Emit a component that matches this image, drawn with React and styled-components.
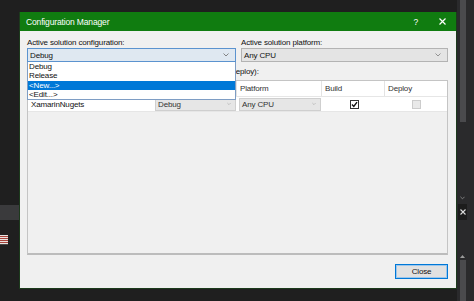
import React from "react";
import styled, { createGlobalStyle } from "styled-components";

const FONT = `"Liberation Sans", Arial, sans-serif`;

const COLORS = {
  desk: "#1f1f1f",
  rail: "#252526",
  green: "#107c10",
  face: "#f0f0f0",
  text: "#111",
  blue: "#0078d7",
  border: "#c4c4c4",
};

const GlobalStyle = createGlobalStyle`
  html, body {
    margin: 0;
    padding: 0;
    background: ${COLORS.desk};
  }
  body {
    font-family: ${FONT};
    font-size: 8px;
    letter-spacing: -0.15px;
    color: ${COLORS.text};
  }
`;

const Screen = styled.div`
  width: 474px;
  height: 301px;
  overflow: hidden;
  display: grid;
  grid-template-columns: 19px 438px 17px;
  grid-template-rows: 12px 277px 12px;
  background: ${COLORS.desk};
`;

const LeftRail = styled.div`
  grid-column: 1;
  grid-row: 1 / -1;
  display: flex;
  flex-direction: column;
  background: ${COLORS.desk};
`;

const RailBand = styled.div`
  margin-top: 205px;
  height: 15px;
  background: #3a3a3c;
`;

const RailIcon = styled.div`
  margin-top: 15px;
  display: flex;
`;

const RightRail = styled.div`
  grid-column: 3;
  grid-row: 1 / -1;
  display: flex;
  flex-direction: column;
  align-items: center;
  background: #2a2a2c;
  color: #c8c8c8;
  padding-left: 1px;
  padding-right: 7px;
`;

const Thumb = styled.div`
  width: 6px;
  height: ${(p) => p.$h}px;
  background: #4a4a4d;
  flex: ${(p) => (p.$grow ? 1 : "none")};
`;

const RailGlyph = styled.div`
  height: ${(p) => p.$h}px;
  display: flex;
  align-items: center;
  justify-content: center;
  width: 9px;
  background: ${(p) => p.$bg || "transparent"};
`;

const Dialog = styled.div`
  grid-column: 2;
  grid-row: 2;
  display: flex;
  flex-direction: column;
  background: ${COLORS.face};
  border: 1px solid #1c3a1c;
  border-top: none;
`;

const TitleBar = styled.div`
  height: 19px;
  flex: none;
  display: flex;
  align-items: center;
  background: ${COLORS.green};
  color: #fff;
  padding-left: 6px;
  padding-right: 10px;
  font-size: 8.5px;
`;

const TitleButtons = styled.div`
  margin-left: auto;
  display: flex;
  align-items: center;
  gap: 21px;
`;

const Body = styled.div`
  flex: 1;
  display: flex;
  flex-direction: column;
  padding: 6px 8px 9px 7px;
`;

const TopRow = styled.div`
  display: grid;
  grid-template-columns: 209px 207px;
  gap: 5px;
`;

const Field = styled.div`
  display: flex;
  flex-direction: column;
  position: relative;
`;

const Label = styled.div`
  height: 11px;
  line-height: 11px;
  white-space: nowrap;
  margin-top: ${(p) => p.$mt || 0}px;
`;

const Combo = styled.div`
  height: 14px;
  box-sizing: border-box;
  display: flex;
  align-items: center;
  padding: 0 6px 0 2px;
  border: 1px solid ${(p) => (p.$open ? "#5b93cf" : "#b3b3b3")};
  background: ${(p) => (p.$open ? "#dfe8f1" : "#e4e4e4")};
`;

const ComboText = styled.span`
  flex: 1;
`;

const DropList = styled.div`
  position: absolute;
  top: 100%;
  left: 0;
  right: 0;
  z-index: 2;
  background: #fff;
  border: 1px solid #7e9dc4;
  border-top: none;
  display: flex;
  flex-direction: column;
`;

const DropItem = styled.div`
  height: 9.25px;
  line-height: 9.25px;
  padding-left: 1px;
  background: ${(p) => (p.$active ? COLORS.blue : "transparent")};
  color: ${(p) => (p.$active ? "#fff" : COLORS.text)};
`;

const Table = styled.div`
  flex: 1;
  margin-top: 3px;
  margin-bottom: 9px;
  border: 1px solid ${COLORS.border};
  border-bottom: 2px solid #bcbcbc;
  background: ${COLORS.face};
  display: flex;
  flex-direction: column;
`;

const GridRow = styled.div`
  display: grid;
  grid-template-columns: 125px 84px 85px 63px 1fr;
  height: ${(p) => p.$h}px;
  background: #fff;
  border-bottom: 1px solid #e6e6e6;
`;

const HeadCell = styled.div`
  display: flex;
  align-items: center;
  padding-left: 3px;
  border-right: 1px solid #e3e3e3;
  color: #333;
  &:last-child {
    border-right: none;
  }
`;

const Cell = styled.div`
  display: flex;
  align-items: center;
  justify-content: ${(p) => (p.$center ? "center" : "flex-start")};
  padding: ${(p) => (p.$pad ? "0 3px" : "0 1px 0 2px")};
`;

const CellCombo = styled.div`
  flex: 1;
  height: 13px;
  box-sizing: border-box;
  display: flex;
  align-items: center;
  padding: 0 4px 0 2px;
  background: #e6e6e6;
  border: 1px solid #cfcfcf;
  color: #333;
`;

const Check = styled.div`
  width: 9px;
  height: 9px;
  box-sizing: border-box;
  display: flex;
  align-items: center;
  justify-content: center;
  border: 1px solid ${(p) => (p.$disabled ? "#cccccc" : "#333")};
  background: ${(p) => (p.$disabled ? "#e9e9e9" : "#fff")};
`;

const Footer = styled.div`
  display: flex;
  justify-content: flex-end;
`;

const Button = styled.button`
  width: 53px;
  height: 15px;
  padding: 0;
  font-family: ${FONT};
  font-size: 8px;
  letter-spacing: -0.15px;
  color: ${COLORS.text};
  background: #e1e1e1;
  border: 1px solid ${COLORS.blue};
  box-shadow: inset 0 0 0 1px #9cc6ec;
`;

const Chevron = ({ color = "#777", w = 6 }) => (
  <svg width={w} height="4" viewBox="0 0 6 4">
    <path d="M0.5 0.5 L3 3 L5.5 0.5" fill="none" stroke={color} strokeWidth="0.9" />
  </svg>
);

const CloseX = () => (
  <svg width="7" height="7" viewBox="0 0 7 7">
    <path d="M0.5 0.5 L6.5 6.5 M6.5 0.5 L0.5 6.5" stroke="#fff" strokeWidth="1.2" />
  </svg>
);

const Tick = () => (
  <svg width="7" height="7" viewBox="0 0 7 7">
    <path d="M1 3.6 L2.8 5.4 L6 1.2" fill="none" stroke="#111" strokeWidth="1.4" />
  </svg>
);

const Flag = () => (
  <svg width="8" height="11" viewBox="0 0 8 11">
    {[0, 2, 4, 6, 8].map((y) => (
      <rect key={y} x="0" y={y} width="8" height="1.2" fill="#e8e3df" />
    ))}
    {[1, 3, 5, 7].map((y) => (
      <rect key={y} x="0" y={y + 0.2} width="8" height="0.8" fill="#c0443a" />
    ))}
  </svg>
);

const configs = ["Debug", "Release", "<New...>", "<Edit...>"];

export default function App() {
  return (
    <>
      <GlobalStyle />
      <Screen>
        <LeftRail>
          <RailBand />
          <RailIcon>
            <Flag />
          </RailIcon>
        </LeftRail>

        <Dialog>
          <TitleBar>
            Configuration Manager
            <TitleButtons>
              <span>?</span>
              <CloseX />
            </TitleButtons>
          </TitleBar>
          <Body>
            <TopRow>
              <Field>
                <Label>Active solution configuration:</Label>
                <Combo $open>
                  <ComboText>Debug</ComboText>
                  <Chevron />
                </Combo>
                <DropList>
                  {configs.map((c) => (
                    <DropItem key={c} $active={c === "<New...>"}>
                      {c}
                    </DropItem>
                  ))}
                </DropList>
              </Field>
              <Field>
                <Label>Active solution platform:</Label>
                <Combo>
                  <ComboText>Any CPU</ComboText>
                  <Chevron color="#888" />
                </Combo>
              </Field>
            </TopRow>
            <Label $mt={4}>
              Project contexts (check the project configurations to build or deploy):
            </Label>
            <Table>
              <GridRow $h={15}>
                <HeadCell>Project</HeadCell>
                <HeadCell>Configuration</HeadCell>
                <HeadCell>Platform</HeadCell>
                <HeadCell>Build</HeadCell>
                <HeadCell>Deploy</HeadCell>
              </GridRow>
              <GridRow $h={14}>
                <Cell $pad>XamarinNugets</Cell>
                <Cell>
                  <CellCombo>
                    <ComboText>Debug</ComboText>
                    <Chevron color="#aaa" w={4} />
                  </CellCombo>
                </Cell>
                <Cell>
                  <CellCombo>
                    <ComboText>Any CPU</ComboText>
                    <Chevron color="#aaa" w={4} />
                  </CellCombo>
                </Cell>
                <Cell $center>
                  <Check>
                    <Tick />
                  </Check>
                </Cell>
                <Cell $center>
                  <Check $disabled />
                </Cell>
              </GridRow>
            </Table>
            <Footer>
              <Button>Close</Button>
            </Footer>
          </Body>
        </Dialog>

        <RightRail>
          <Thumb $h={122} />
          <RailGlyph $h={70} />
          <RailGlyph $h={12}>
            <Chevron color="#9a9a9a" w={5} />
          </RailGlyph>
          <RailGlyph $h={16} $bg="#1c1c1c">
            <svg width="6" height="6" viewBox="0 0 6 6">
              <path d="M0.5 0.5 L5.5 5.5 M5.5 0.5 L0.5 5.5" stroke="#ddd" strokeWidth="1.1" />
            </svg>
          </RailGlyph>
          <RailGlyph $h={32} />
          <RailGlyph $h={8}>
            <svg width="5" height="3" viewBox="0 0 5 3">
              <path d="M0 3 L2.5 0 L5 3 Z" fill="#9a9a9a" />
            </svg>
          </RailGlyph>
          <Thumb $grow />
        </RightRail>
      </Screen>
    </>
  );
}
